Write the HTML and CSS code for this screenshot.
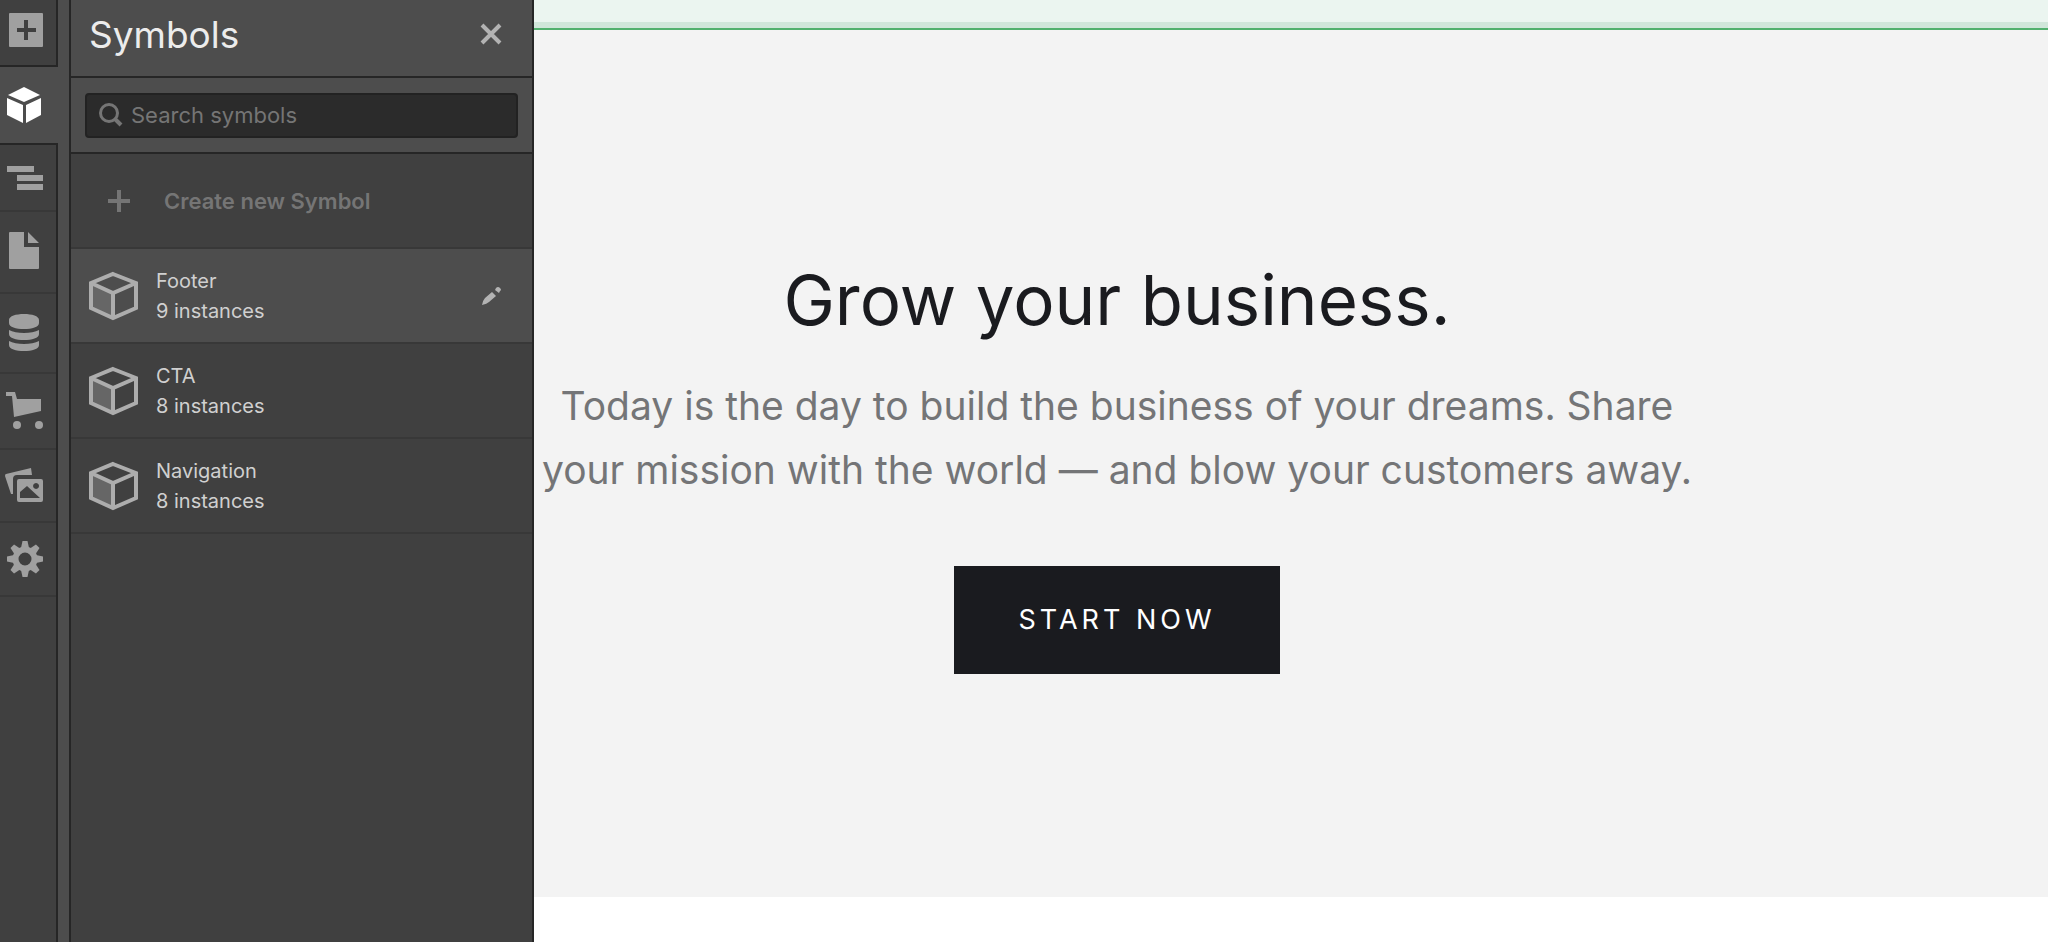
FILE: index.html
```html
<!DOCTYPE html>
<html lang="en">
<head>
    <meta charset="UTF-8">
    <meta name="viewport" content="width=device-width, initial-scale=1.0">
    <title>Symbols</title>
    <link rel="stylesheet" href="styles.css">
</head>
<body>
    <div class="designer">
        <nav class="rail">
            <button class="rail-item add" type="button" aria-label="Add elements">
                <svg width="44" height="34" viewBox="0 0 44 34"><path fill-rule="evenodd" d="M10 0h32a1 1 0 0 1 1 1v32a1 1 0 0 1-1 1H10a1 1 0 0 1-1-1V1a1 1 0 0 1 1-1zM24 7v8h-7v4h7v8h4v-8h8v-4h-8V7z"/></svg>
            </button>
            <button class="rail-item active" type="button" aria-label="Symbols">
                <svg width="44" height="36" viewBox="0 0 44 36"><path d="M24 0L40 8L24 15L8 8zM7 11L23 18V36L7 28zM41 11L26 18V36L41 28z"/></svg>
            </button>
            <button class="rail-item navigator" type="button" aria-label="Navigator">
                <svg width="44" height="26" viewBox="0 0 44 26"><path d="M7 0h27v6H7zM17 9h26v6H17zM17 18h26v6H17z"/></svg>
            </button>
            <button class="rail-item pages" type="button" aria-label="Pages">
                <svg width="44" height="42" viewBox="0 0 44 42"><path d="M10 0h14v15h15v21a1 1 0 0 1-1 1H10a1 1 0 0 1-1-1V1a1 1 0 0 1 1-1zM28 0L39 11H28z"/></svg>
            </button>
            <button class="rail-item cms" type="button" aria-label="CMS">
                <svg width="44" height="40" viewBox="0 0 44 40"><path d="M9 6C9 2 16 0 24 0S39 2 39 6v3c0 4-7 6-15 6S9 13 9 9zM9 16c7 4 23 4 30 0v4c0 4-7 6-15 6S9 24 9 20zM9 27c7 4 23 4 30 0v4c0 4-7 6-15 6S9 35 9 31z"/></svg>
            </button>
            <button class="rail-item shop" type="button" aria-label="Ecommerce">
                <svg width="44" height="38" viewBox="0 0 44 38"><path d="M6 0h9l2 7h24v12L14 25L12 4H6z"/><circle cx="17" cy="33" r="4"/><circle cx="39" cy="33" r="4"/></svg>
            </button>
            <button class="rail-item assets" type="button" aria-label="Assets">
                <svg width="44" height="38" viewBox="0 0 44 38"><path d="M6 6L31 0L32 7H17Q13 7 13 11V26H11L5 8Q5 6 6 6z"/><path fill-rule="evenodd" d="M19 11h22q2 0 2 2v19q0 2-2 2H19q-2 0-2-2V13q0-2 2-2zM20 30h20L27 18L20 24zM36 15a3 3 0 1 0 .1 0z"/></svg>
            </button>
            <button class="rail-item settings" type="button" aria-label="Settings">
                <svg width="44" height="38" viewBox="0 0 44 38"><g transform="translate(25 18)"><circle r="9.5" fill="none" stroke="#a0a0a0" stroke-width="6"/><path d="M-4-11L-2.5-18H2.500L4-11z"/><path d="M-4-11L-2.5-18H2.500L4-11z" transform="rotate(45)"/><path d="M-4-11L-2.5-18H2.500L4-11z" transform="rotate(90)"/><path d="M-4-11L-2.5-18H2.500L4-11z" transform="rotate(135)"/><path d="M-4-11L-2.5-18H2.500L4-11z" transform="rotate(180)"/><path d="M-4-11L-2.5-18H2.500L4-11z" transform="rotate(225)"/><path d="M-4-11L-2.5-18H2.500L4-11z" transform="rotate(270)"/><path d="M-4-11L-2.5-18H2.500L4-11z" transform="rotate(315)"/></g></svg>
            </button>
        </nav>

        <aside class="panel">
            <header class="panel-header">
                <h1>Symbols</h1>
                <button class="icon-button" type="button" aria-label="Close">
                    <svg width="22" height="22" viewBox="0 0 22 22"><path d="M2 2L20 20M20 2L2 20" fill="none" stroke="#b3b3b3" stroke-width="4"/></svg>
                </button>
            </header>
            <div class="search">
                <label class="search-box">
                    <svg width="24" height="24" viewBox="0 0 24 24" fill="none" stroke="#757575"><circle cx="10" cy="10" r="8.5" stroke-width="3"/><path d="M16 16L22 22" stroke-width="4"/></svg>
                    <input type="text" placeholder="Search symbols" aria-label="Search symbols">
                </label>
            </div>
            <button class="create" type="button">
                <svg width="22" height="22" viewBox="0 0 22 22"><path d="M11 0V22M0 11H22" stroke="#757575" stroke-width="4"/></svg>
                <span>Create new Symbol</span>
            </button>
            <ul class="symbols">
                <li class="symbol selected">
                    <svg width="50" height="50" viewBox="0 0 50 50"><path class="cube-face" d="M3 12L25 22V47L3 37z"/><path class="cube-line" d="M25 3L48 12V37L25 47L3 37V12zM3 12L25 22L48 12M25 22V47"/></svg>
                    <div class="symbol-text">
                        <div>Footer</div>
                        <div>9 instances</div>
                    </div>
                    <button class="icon-button" type="button" aria-label="Edit Footer">
                        <svg width="20" height="20" viewBox="0 0 20 20"><path fill="#b3b3b3" d="M0 19Q1 14 3 12L10 6L14 10L7 16Q5 18 0 19zM13 4L14 2Q16 0 18 2T18 5L17 7z"/></svg>
                    </button>
                </li>
                <li class="symbol">
                    <svg width="50" height="50" viewBox="0 0 50 50"><path class="cube-face" d="M3 12L25 22V47L3 37z"/><path class="cube-line" d="M25 3L48 12V37L25 47L3 37V12zM3 12L25 22L48 12M25 22V47"/></svg>
                    <div class="symbol-text">
                        <div>CTA</div>
                        <div>8 instances</div>
                    </div>
                </li>
                <li class="symbol">
                    <svg width="50" height="50" viewBox="0 0 50 50"><path class="cube-face" d="M3 12L25 22V47L3 37z"/><path class="cube-line" d="M25 3L48 12V37L25 47L3 37V12zM3 12L25 22L48 12M25 22V47"/></svg>
                    <div class="symbol-text">
                        <div>Navigation</div>
                        <div>8 instances</div>
                    </div>
                </li>
            </ul>
        </aside>

        <main class="canvas">
            <div class="previous-section"></div>
            <section class="cta">
                <h2>Grow your business.</h2>
                <p>Today is the day to build the business of your dreams. Share<br>your mission with the world — and blow your customers away.</p>
                <a class="cta-button" href="#">START NOW</a>
            </section>
        </main>
    </div>
</body>
</html>
```
FILE: styles.css
```css
* {
    box-sizing: border-box;
}

body {
    margin: 0;
    font-family: Inter, "Liberation Sans", sans-serif;
    background: #fff;
}

button {
    margin: 0;
    padding: 0;
    border: 0;
    background: none;
    font-family: inherit;
    cursor: pointer;
}

svg {
    display: block;
    flex-shrink: 0;
}

.designer {
    display: flex;
    min-height: 100vh;
    background: #4d4d4d;
}

/* left icon rail */
.rail {
    display: flex;
    flex-direction: column;
    flex-shrink: 0;
    width: 58px;
    margin-right: 11px;
}

.rail::after {
    content: "";
    flex: 1;
    background: #404040;
    border-right: 2px solid #262626;
}

.rail-item {
    display: flex;
    align-items: center;
    background: linear-gradient(#383838, #383838) bottom / 100% 2px no-repeat #404040;
    border-right: 2px solid #262626;
    fill: #a0a0a0;
}

.rail-item.active {
    height: 80px;
    background: #4d4d4d;
    border-top: 2px solid #262626;
    border-bottom: 2px solid #262626;
    border-right: 0;
    fill: #fff;
}

.rail-item.add {
    height: 65px;
    padding-bottom: 5px;
    background: #404040;
}

.navigator {
    height: 67px;
}

.pages {
    height: 82px;
}

.cms {
    height: 80px;
}

.shop {
    height: 76px;
    padding-bottom: 2px;
}

.assets {
    height: 73px;
}

.settings {
    height: 74px;
}

/* symbols panel */
.panel {
    flex-shrink: 0;
    width: 465px;
    background: #404040;
    border-left: 2px solid #262626;
    border-right: 2px solid #262626;
}

.panel-header {
    display: flex;
    align-items: center;
    justify-content: space-between;
    height: 78px;
    padding: 0 30px 8px 18px;
    background: #4d4d4d;
    border-bottom: 2px solid #262626;
}

.panel-header h1 {
    margin: 0;
    font-size: 37px;
    font-weight: 400;
    color: #ececec;
}

.search {
    padding: 15px 14px 14px;
    background: #4d4d4d;
    border-bottom: 2px solid #262626;
}

.search-box {
    display: flex;
    align-items: center;
    gap: 8px;
    height: 45px;
    padding: 0 12px 1px;
    background: #2b2b2b;
    border: 2px solid #222;
    border-radius: 4px;
}

.search-box input {
    flex: 1;
    min-width: 0;
    padding: 0;
    border: 0;
    outline: 0;
    background: none;
    font-family: inherit;
    font-size: 22px;
    color: #d9d9d9;
}

.search-box input::placeholder {
    color: #757575;
    opacity: 1;
}

.create {
    display: flex;
    align-items: center;
    gap: 34px;
    width: 100%;
    height: 95px;
    padding-left: 37px;
    border-bottom: 2px solid #383838;
    font-size: 22px;
    font-weight: 600;
    color: #757575;
}

.symbols {
    margin: 0;
    padding: 0;
    list-style: none;
}

.symbol {
    display: flex;
    align-items: center;
    gap: 18px;
    height: 95px;
    padding: 0 30px 0 17px;
    border-bottom: 2px solid #383838;
    font-size: 20px;
    line-height: 30px;
    color: #d0d0d0;
}

.symbol.selected {
    background: #4d4d4d;
}

.symbol-text {
    flex: 1;
}

.cube-face {
    fill: #666;
}

.cube-line {
    fill: none;
    stroke: #adadad;
    stroke-width: 4;
}

/* site canvas */
.canvas {
    flex: 1;
    min-width: 0;
    background: #fff;
}

.previous-section {
    height: 30px;
    background: #ebf5f0;
    border-bottom: 2px solid #52b06e;
    box-shadow: inset 0 -6px #d0e6da;
}

.cta {
    display: flex;
    flex-direction: column;
    align-items: center;
    padding: 230px 348px 223px 0;
    background: #f3f3f3;
    text-align: center;
    white-space: nowrap;
}

.cta h2 {
    margin: 0 0 34px;
    font-size: 69px;
    font-weight: 400;
    line-height: 80px;
    color: #1a1b1f;
}

.cta p {
    margin: 0 0 64px;
    font-size: 39px;
    line-height: 64px;
    color: #747577;
}

.cta-button {
    padding: 38px 64px;
    background: #1a1b1f;
    font-size: 27px;
    line-height: 32px;
    letter-spacing: 4px;
    color: #fff;
    text-decoration: none;
}
```
